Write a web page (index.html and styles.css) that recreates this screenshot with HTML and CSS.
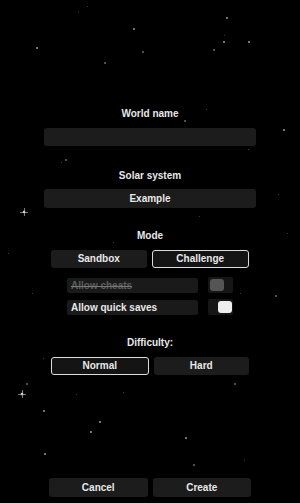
FILE: index.html
```html
<!DOCTYPE html>
<html>
  <head>
    <title>New world</title>
    <link rel="stylesheet" href="styles.css">
  </head>
  <body>
    <!-- starfield backdrop -->
    <div class="stars">
      <i class="star big" style="left:23px;top:211px"></i>
      <i class="star big" style="left:21px;top:393px"></i>
      <i class="star" style="left:36px;top:47px"></i>
      <i class="star" style="left:133px;top:28px"></i>
      <i class="star dim" style="left:104px;top:62px"></i>
      <i class="star dim" style="left:142px;top:51px"></i>
      <i class="star" style="left:226px;top:17px"></i>
      <i class="star" style="left:223px;top:41px"></i>
      <i class="star" style="left:248px;top:41px"></i>
      <i class="star dim" style="left:213px;top:49px"></i>
      <i class="star faint" style="left:87px;top:6px"></i>
      <i class="star faint" style="left:78px;top:12px"></i>
      <i class="star faint" style="left:224px;top:35px"></i>
      <i class="star" style="left:283px;top:129px"></i>
      <i class="star dim" style="left:184px;top:120px"></i>
      <i class="star faint" style="left:206px;top:109px"></i>
      <i class="star faint" style="left:248px;top:149px"></i>
      <i class="star faint" style="left:211px;top:143px"></i>
      <i class="star dim" style="left:65px;top:159px"></i>
      <i class="star faint" style="left:61px;top:162px"></i>
      <i class="star faint" style="left:199px;top:216px"></i>
      <i class="star faint" style="left:278px;top:194px"></i>
      <i class="star faint" style="left:287px;top:233px"></i>
      <i class="star faint" style="left:88px;top:195px"></i>
      <i class="star faint" style="left:8px;top:253px"></i>
      <i class="star faint" style="left:32px;top:293px"></i>
      <i class="star dim" style="left:275px;top:295px"></i>
      <i class="star faint" style="left:240px;top:293px"></i>
      <i class="star faint" style="left:43px;top:358px"></i>
      <i class="star faint" style="left:113px;top:242px"></i>
      <i class="star dim" style="left:26px;top:383px"></i>
      <i class="star faint" style="left:76px;top:394px"></i>
      <i class="star" style="left:43px;top:410px"></i>
      <i class="star" style="left:99px;top:421px"></i>
      <i class="star" style="left:90px;top:431px"></i>
      <i class="star" style="left:44px;top:453px"></i>
      <i class="star" style="left:185px;top:437px"></i>
      <i class="star dim" style="left:193px;top:464px"></i>
      <i class="star dim" style="left:234px;top:383px"></i>
      <i class="star faint" style="left:244px;top:460px"></i>
      <i class="star faint" style="left:123px;top:392px"></i>
    </div>

    <div class="panel">
      <div class="label first">World name</div>
      <div class="field"></div>

      <div class="label system">Solar system</div>
      <div class="field system-field">Example</div>

      <div class="label">Mode</div>
      <div class="choice">
        <div class="btn">Sandbox</div>
        <div class="btn selected">Challenge</div>
      </div>

      <div class="option first-option">
        <div class="option-name disabled">Allow cheats</div>
        <div class="toggle"><span class="knob off"></span></div>
      </div>
      <div class="option">
        <div class="option-name">Allow quick saves</div>
        <div class="toggle"><span class="knob on"></span></div>
      </div>

      <div class="label">Difficulty:</div>
      <div class="choice">
        <div class="btn selected">Normal</div>
        <div class="btn">Hard</div>
      </div>

      <div class="footer">
        <div class="btn">Cancel</div>
        <div class="btn">Create</div>
      </div>
    </div>
  </body>
</html>
```
FILE: styles.css
```css
html, body {
  margin: 0;
  padding: 0;
}

body {
  background: #000;
  color: #e8e8e8;
  font-family: "Liberation Sans", Arial, sans-serif;
  font-weight: bold;
  font-size: 10px;
  width: 300px;
  height: 503px;
  overflow: hidden;
  position: relative;
}

.stars {
  position: absolute;
  left: 0;
  top: 0;
  width: 300px;
  height: 503px;
}

.star {
  position: absolute;
  width: 2px;
  height: 2px;
  background: #9a9a9a;
  border-radius: 1px;
}

.star.dim {
  background: #6a6a6a;
}

.star.faint {
  width: 1px;
  height: 1px;
  background: #4a4a4a;
}

.star.big {
  background: #eee;
  box-shadow: 0 0 2px #fff;
}

.star.big::before,
.star.big::after {
  content: "";
  position: absolute;
  background: rgba(220, 220, 220, 0.55);
}

.star.big::before {
  left: -3px;
  top: 0.5px;
  width: 8px;
  height: 1px;
}

.star.big::after {
  left: 0.5px;
  top: -3px;
  width: 1px;
  height: 8px;
}

.panel {
  position: relative;
  display: flex;
  flex-direction: column;
  align-items: center;
  height: 503px;
}

.label {
  line-height: 12px;
  margin-top: 22px;
  margin-bottom: 8px;
  text-align: center;
}

.label.first {
  margin-top: 108px;
}

.label.system {
  margin-top: 24px;
  margin-bottom: 7px;
}

.field {
  width: 212px;
  height: 18px;
  line-height: 18px;
  background: #1c1c1c;
  border-radius: 3px;
  text-align: center;
}

.field.system-field {
  height: 19px;
  line-height: 19px;
}

.choice {
  display: flex;
  gap: 5px;
  width: 198px;
}

.choice .btn {
  flex: 1;
}

.btn {
  height: 18px;
  line-height: 18px;
  background: #1c1c1c;
  border-radius: 3px;
  text-align: center;
  box-sizing: border-box;
}

.btn.selected {
  background: #141414;
  border: 1px solid #dcdcdc;
  line-height: 16px;
}

.option {
  display: flex;
  align-items: center;
  gap: 10px;
  width: 166px;
  margin-top: 6px;
}

.option.first-option {
  margin-top: 9px;
}

.option-name {
  flex: 1;
  height: 15px;
  line-height: 15px;
  background: #1a1a1a;
  border-radius: 2px;
  padding-left: 4px;
}

.option-name.disabled {
  color: #5c5c5c;
  text-decoration: line-through;
  text-decoration-color: #777;
}

.toggle {
  width: 25px;
  height: 16px;
  background: #161616;
  border-radius: 2px;
  display: flex;
  align-items: center;
  padding: 0 1px;
  box-sizing: border-box;
}

.knob {
  width: 14px;
  height: 12px;
  border-radius: 3px;
}

.knob.off {
  background: #555;
  margin-left: 1px;
}

.knob.on {
  background: #eee;
  margin-left: auto;
}

.footer {
  display: flex;
  gap: 5px;
  width: 202px;
  margin-top: auto;
  margin-bottom: 6px;
}

.footer .btn {
  flex: 1;
  height: 19px;
  line-height: 19px;
}
```
